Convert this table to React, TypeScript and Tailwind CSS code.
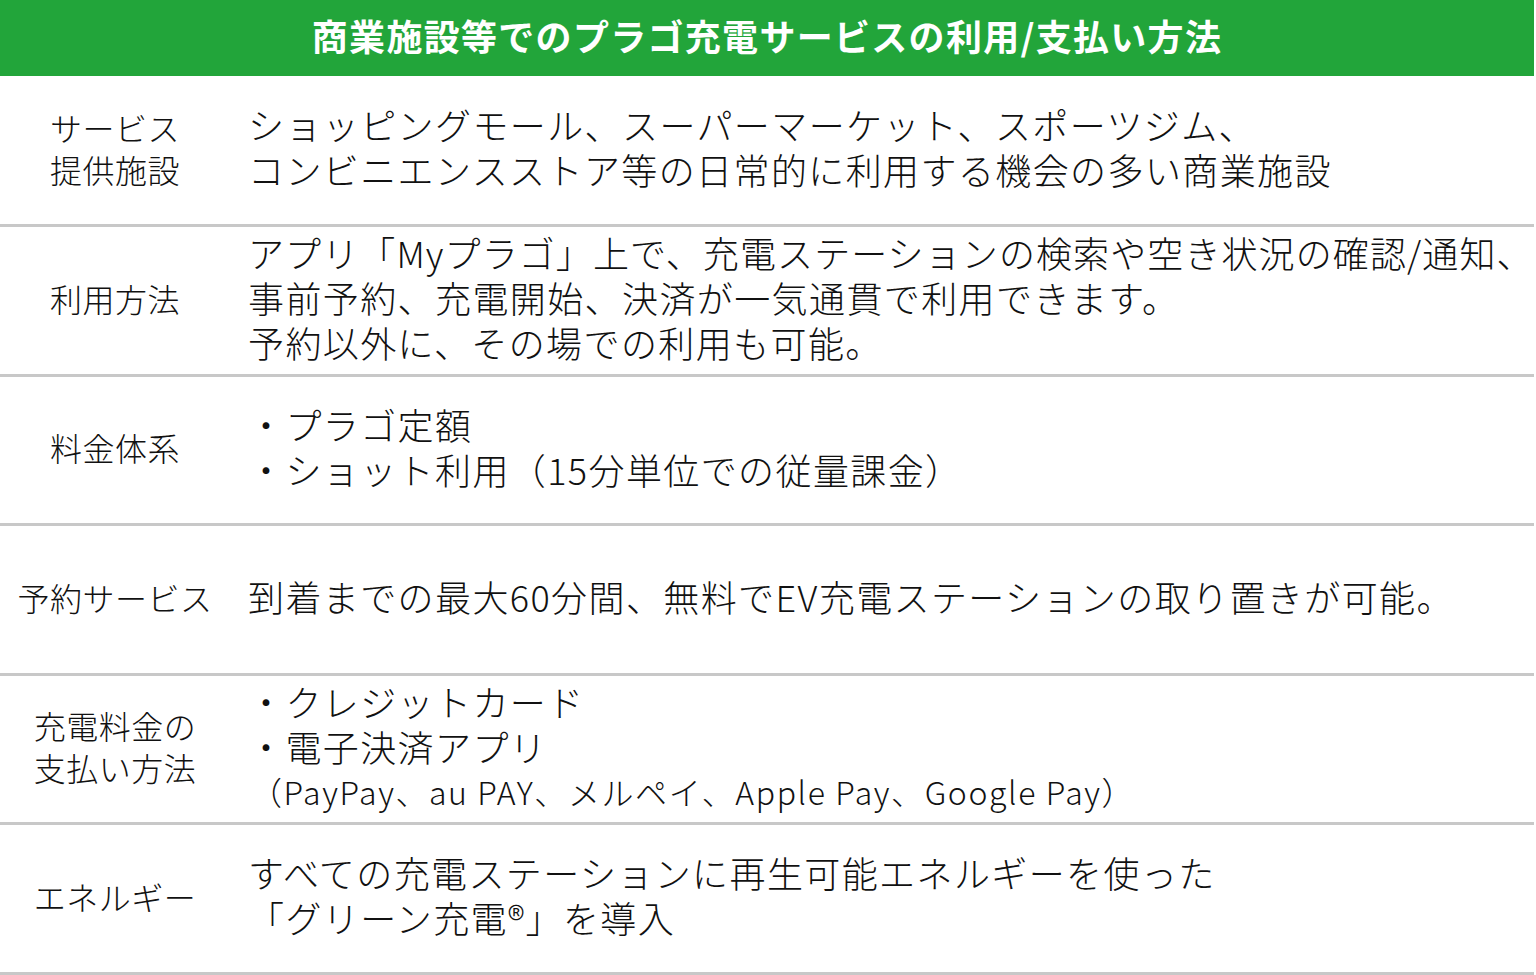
import React from 'react';

const jp = { fontFamily: '"Noto Sans CJK JP", "Noto Sans", sans-serif' };

interface Row {
  label: string[];
  lines: string[];
  h: string;
}

const rows: Row[] = [
  {
    label: ['サービス', '提供施設'],
    lines: [
      'ショッピングモール、スーパーマーケット、スポーツジム、',
      'コンビニエンスストア等の日常的に利用する機会の多い商業施設',
    ],
    h: 'h-[148px]',
  },
  {
    label: ['利用方法'],
    lines: [
      'アプリ「Myプラゴ」上で、充電ステーションの検索や空き状況の確認/通知、',
      '事前予約、充電開始、決済が一気通貫で利用できます。',
      '予約以外に、その場での利用も可能。',
    ],
    h: 'h-[146.5px]',
  },
  {
    label: ['料金体系'],
    lines: ['・プラゴ定額', '・ショット利用（15分単位での従量課金）'],
    h: 'h-[146.5px]',
  },
  {
    label: ['予約サービス'],
    lines: ['到着までの最大60分間、無料でEV充電ステーションの取り置きが可能。'],
    h: 'h-[146.5px]',
  },
  {
    label: ['充電料金の', '支払い方法'],
    lines: ['・クレジットカード', '・電子決済アプリ'],
    h: 'h-[146.5px]',
  },
  {
    label: ['エネルギー'],
    lines: ['すべての充電ステーションに再生可能エネルギーを使った', '「グリーン充電®」を導入'],
    h: 'h-[146.5px]',
  },
];

export default function App() {
  return (
    <div className="w-[1536px] h-[975px] bg-white overflow-hidden" style={jp}>
      <div className="w-[1534px]">
        {/* Title bar */}
        <div className="h-[76px] bg-[#22a53a] flex items-center justify-center pb-[6px]">
          <h1 className="text-white font-bold text-[36px] leading-none tracking-[1.3px]">
            商業施設等でのプラゴ充電サービスの利用/支払い方法
          </h1>
        </div>

        {rows.map((row, i) => (
          <div key={i} className="flex border-b-[3px] border-[#c8c8c8]">
            <div className={`${row.h} w-[230px] shrink-0 flex items-center justify-center pb-[5px]`}>
              <p className="text-center text-[32px] leading-[42px] font-light text-[#111] tracking-[0.5px]">
                {row.label.map((l, j) => (
                  <span key={j} className="block whitespace-nowrap">{l}</span>
                ))}
              </p>
            </div>
            <div className="flex-1 flex items-center pl-[18px] pb-[6px] min-w-0">
              <div className="text-[36px] leading-[45px] font-light text-[#111] tracking-[1.4px]">
                {row.lines.map((l, j) => (
                  <div
                    key={j}
                    className={i === 1 && j === 0 ? 'whitespace-nowrap tracking-[1.1px]' : 'whitespace-nowrap'}
                  >
                    {l}
                  </div>
                ))}
                {i === 4 && (
                  <div className="whitespace-nowrap text-[32px] leading-[44px] tracking-[1.6px] pl-[2px]">
                    （PayPay、au PAY、メルペイ、Apple Pay、Google Pay）
                  </div>
                )}
              </div>
            </div>
          </div>
        ))}
      </div>
    </div>
  );
}
